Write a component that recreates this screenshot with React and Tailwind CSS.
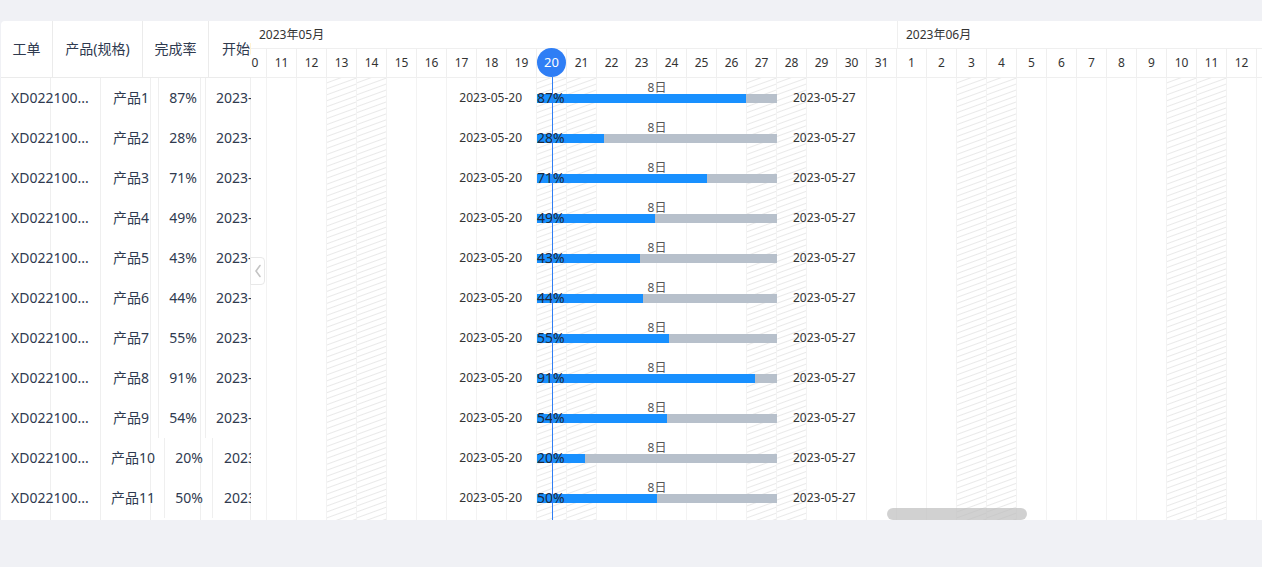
import React from 'react';

const rates = [87, 28, 71, 49, 43, 44, 55, 91, 54, 20, 50];

const days = [
  ...Array.from({ length: 22 }, (_, i) => ({ m: 5, d: 10 + i })),
  ...Array.from({ length: 13 }, (_, i) => ({ m: 6, d: 1 + i })),
];
const weekends = ['5-13', '5-14', '5-20', '5-21', '5-27', '5-28', '6-3', '6-4', '6-10', '6-11'];

const hatch =
  'bg-[repeating-linear-gradient(160deg,transparent_0,transparent_3.5px,#e9e9e9_4.5px,transparent_5.5px,transparent_5.6px)]';

function LeftRow({ index, rate }) {
  const wide = index >= 9;
  return (
    <div className="flex h-[40px] items-center text-sm text-[#2f3a4f]">
      <div className="w-[99px] pl-[10px] whitespace-nowrap">XD022100...</div>
      {wide ? (
        <>
          <div className="w-[64px] text-right pr-[9px] whitespace-nowrap">产品{index + 1}</div>
          <div className="h-full w-[48px] border-l border-[#efefef] flex items-center justify-end pr-[9px]">{rate}%</div>
          <div className="h-full w-[39px] border-l border-[#efefef] flex items-center pl-[11px] overflow-hidden whitespace-nowrap">2023-05-20</div>
        </>
      ) : (
        <>
          <div className="w-[51px] text-right pr-[2px] whitespace-nowrap">产品{index + 1}</div>
          <div className="h-full w-[7px]" />
          <div className="h-full w-[43px] border-l border-[#efefef] flex items-center justify-end pr-[4px]">{rate}%</div>
          <div className="h-full w-[4px]" />
          <div className="h-full w-[46px] border-l border-[#efefef] flex items-center pl-[10px] overflow-hidden whitespace-nowrap">2023-05-20</div>
        </>
      )}
    </div>
  );
}

function BarRow({ rate }) {
  return (
    <div className="flex h-[40px] items-center text-xs text-[#333]">
      <div className="w-[285px] text-right whitespace-nowrap">2023-05-20</div>
      <div className="w-[15px]" />
      <div className="relative h-[9px] w-[240px] bg-[#b7c0cb]">
        <div className="h-full bg-[#1890ff]" style={{ width: `${(rate / 100) * 240}px` }} />
        <span className="absolute left-0 top-1/2 -translate-y-1/2 text-sm leading-none text-[#1f2a3d]">{rate}%</span>
        <span className="absolute left-0 right-0 -top-[12px] text-center text-xs leading-[12px] text-[#555]">8日</span>
      </div>
      <div className="w-[16px]" />
      <div className="whitespace-nowrap">2023-05-27</div>
    </div>
  );
}

export default function App() {
  return (
    <div
      className="h-[567px] w-full overflow-hidden bg-[#f0f1f5] pt-[21px] pl-[1px]"
      style={{ fontFamily: '"Noto Sans", "Noto Sans CJK SC", sans-serif' }}
    >
      <div className="flex h-[499px] w-[1300px] rounded-tl bg-white">
        {/* left table */}
        <div className="relative w-[250px] shrink-0">
          <div className="flex h-[57px] border-b border-[#ebebeb] text-sm text-[#2f3a4f]">
            <div className="flex w-[52px] items-center justify-center border-r border-[#ebebeb]">工单</div>
            <div className="flex w-[90px] items-center justify-center border-r border-[#ebebeb]">产品(规格)</div>
            <div className="flex w-[66px] items-center justify-center border-r border-[#ebebeb]">完成率</div>
            <div className="flex w-[42px] items-center pl-[13px] overflow-hidden whitespace-nowrap">开始时间</div>
          </div>
          <div className="h-[442px] bg-[repeating-linear-gradient(to_right,transparent_0,transparent_49px,#efefef_49px,#efefef_50px)]">
            {rates.map((r, i) => (
              <LeftRow key={i} index={i} rate={r} />
            ))}
          </div>
          <button className="absolute left-[249px] top-[236px] z-10 flex h-[28px] w-[15px] items-center justify-center rounded-r border border-[#e8e8e8] bg-white">
            <svg width="8" height="14" viewBox="0 0 8 14" fill="none">
              <path d="M6 1.5 L2 7 L6 12.5" stroke="#c4c4c4" strokeWidth="1.6" strokeLinecap="round" />
            </svg>
          </button>
        </div>

        {/* timeline */}
        <div className="relative flex-1 overflow-hidden">
          <div className="flex h-[28px] border-b border-[#efefef] text-xs text-[#333]">
            <div className="flex w-[646px] items-center pl-[8px]">2023年05月</div>
            <div className="flex flex-1 items-center border-l border-[#efefef] pl-[8px]">2023年06月</div>
          </div>
          <div className="ml-[-14px] flex h-[29px] border-b border-[#efefef] text-xs text-[#333]">
            {days.map((x) => (
              <div key={`${x.m}-${x.d}`} className="flex w-[30px] shrink-0 items-center justify-center border-r border-[#efefef]">
                {x.m === 5 && x.d === 20 ? (
                  <span className="z-10 mt-[-1px] flex h-[29px] w-[29px] shrink-0 items-center justify-center rounded-full bg-[#2f7ef5] text-[13px] text-white">20</span>
                ) : (
                  x.d
                )}
              </div>
            ))}
          </div>
          <div className="ml-[-14px] grid h-[442px]">
            <div className="col-start-1 row-start-1 flex">
              {days.map((x) => (
                <div
                  key={`${x.m}-${x.d}`}
                  className={`h-full w-[30px] shrink-0 border-r border-[#f3f3f3] ${weekends.includes(`${x.m}-${x.d}`) ? hatch : ''}`}
                />
              ))}
            </div>
            <div className="col-start-1 row-start-1">
              {rates.map((r, i) => (
                <BarRow key={i} rate={r} />
              ))}
            </div>
          </div>
          {/* today line */}
          <div className="absolute left-[301px] top-[56px] bottom-0 w-px bg-[#2f7ef5]" />
          {/* scrollbar */}
          <div className="absolute left-[636px] bottom-0 h-[12px] w-[140px] rounded-md bg-[#bdbdbd]/70" />
        </div>
      </div>
    </div>
  );
}
